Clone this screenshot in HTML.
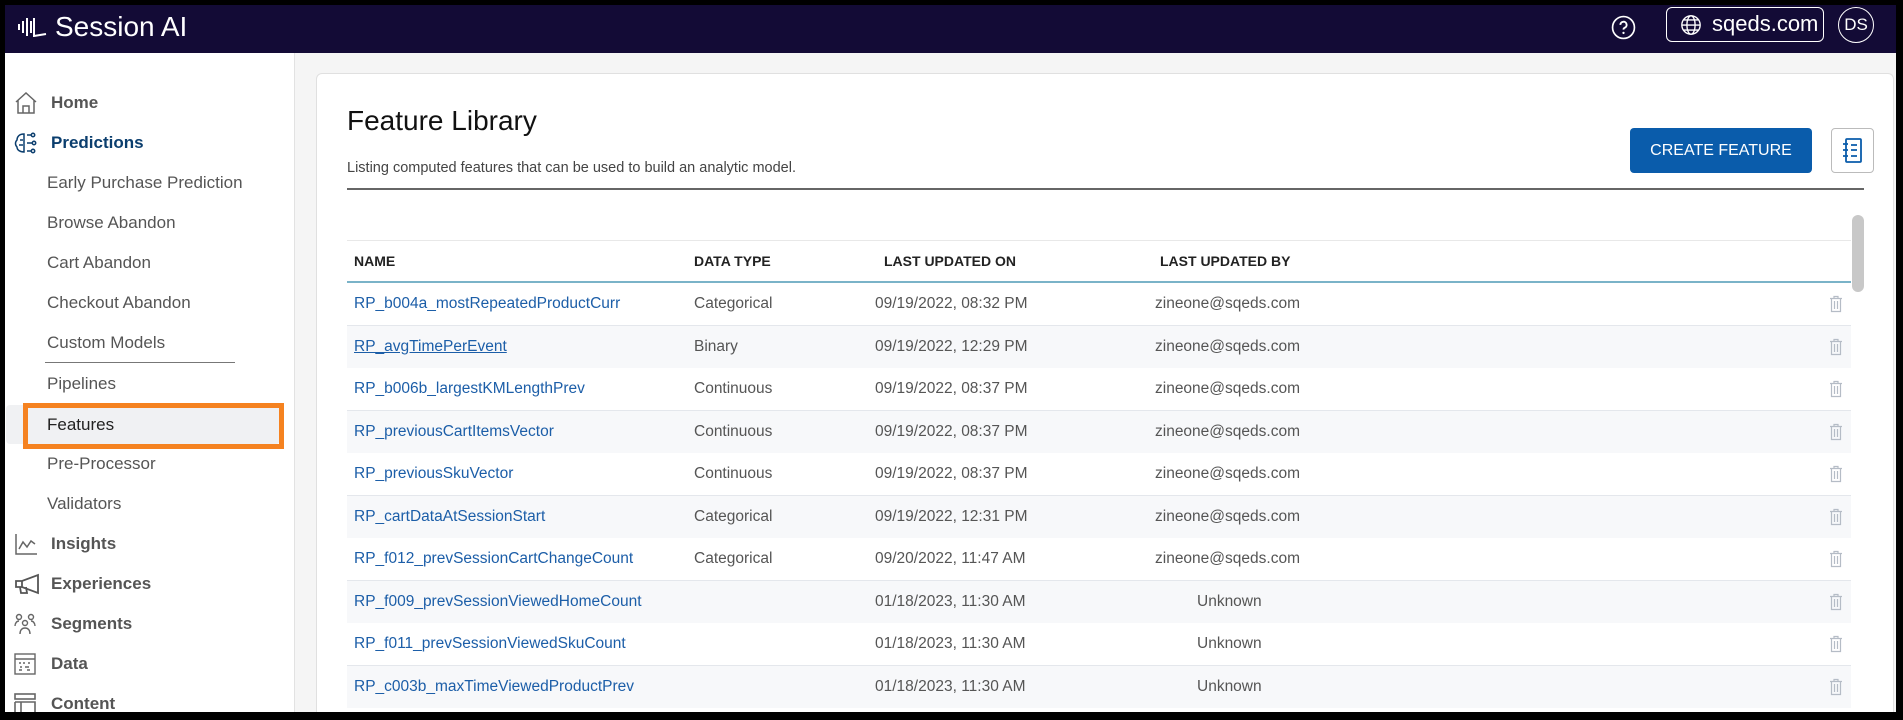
<!DOCTYPE html>
<html><head><meta charset="utf-8"><style>
*{margin:0;padding:0;box-sizing:border-box}
html,body{width:1903px;height:720px;overflow:hidden}
body{background:#000;position:relative;font-family:"Liberation Sans",Arial,sans-serif}
.a{position:absolute;white-space:nowrap}
#hdr{left:5px;top:5px;width:1891px;height:48px;background:#130b36}
#side{left:5px;top:53px;width:290px;height:659px;background:#fff;border-right:1px solid #e2e2e2}
#main{left:295px;top:53px;width:1601px;height:659px;background:#f5f5f5}
#card{left:316px;top:73px;width:1578px;height:639px;background:#fff;border:1px solid #e0e0e0;border-bottom:none;border-radius:6px 6px 0 0}
.nav{font-size:17px;font-weight:bold;color:#555;left:51px;transform:translateY(-50%)}
.sub{font-size:17px;color:#555;left:47px;transform:translateY(-50%)}
.ic{left:14px;transform:translateY(-50%)}
.row{left:347px;width:1504px;height:43px;border-bottom:1px solid #e4e7ec;font-size:15.5px;color:#555}
.row span{position:absolute;top:50%;transform:translateY(-50%)}
.th{font-size:14px;font-weight:bold;color:#222;top:261px;transform:translateY(-50%)}
#clip{position:absolute;left:0;top:0;width:1903px;height:712px;overflow:hidden}
</style></head><body>
<div id="clip">
<div class="a" id="hdr"></div>
<svg class="a" style="left:17px;top:17px" width="30" height="20" viewBox="0 0 30 20"><g stroke="#fff" stroke-width="2" fill="none"><path d="M2 7v6M6 4v12M10 1v18M14 4v12M17 1v18L29 17"/></g></svg>
<div class="a" style="left:55px;top:11px;font-size:28px;color:#fff">Session AI</div>
<svg class="a" style="left:1611px;top:15px" width="25" height="25" viewBox="0 0 24 24"><circle cx="12" cy="12" r="10.5" fill="none" stroke="#fff" stroke-width="1.6"/><path d="M9 9.5a3 3 0 1 1 4 2.8c-.8.4-1 .9-1 1.7" fill="none" stroke="#fff" stroke-width="1.8"/><circle cx="12" cy="17.2" r="1.1" fill="#fff"/></svg>
<div class="a" style="left:1666px;top:7px;width:158px;height:35px;border:1px solid #fff;border-radius:6px"></div>
<svg class="a" style="left:1680px;top:14px" width="22" height="22" viewBox="0 0 24 24"><g fill="none" stroke="#fff" stroke-width="1.5"><circle cx="12" cy="12" r="10"/><ellipse cx="12" cy="12" rx="4.5" ry="10"/><path d="M2 12h20M4 6.5h16M4 17.5h16"/></g></svg>
<div class="a" style="left:1712px;top:11px;font-size:22px;color:#fff">sqeds.com</div>
<div class="a" style="left:1838px;top:7px;width:36px;height:36px;border:1px solid #fff;border-radius:50%;color:#fff;font-size:17px;line-height:34px;text-align:center">DS</div>

<div class="a" id="main"></div>
<div class="a" id="side"></div>

<svg class="a ic" style="top:103px" width="24" height="22" viewBox="0 0 24 22"><path d="M2 10 12 1l10 9M4 8v13h16V8M9 21v-7h6v7" fill="none" stroke="#666" stroke-width="1.5"/></svg>
<div class="a nav" style="top:103px">Home</div>
<svg class="a ic" style="top:143px" width="24" height="22" viewBox="0 0 24 22"><g fill="none" stroke="#0b3e6e" stroke-width="1.5"><path d="M10 2C5 2 3 5 3 8c-2 2-2 5 0 7 0 3 3 5 7 5V2zM6 8h3M5 13h4M17 3h-4M18 11h-5M17 19h-4"/><circle cx="19" cy="3" r="1.7"/><circle cx="20" cy="11" r="1.7"/><circle cx="19" cy="19" r="1.7"/></g></svg>
<div class="a nav" style="top:143px;color:#0b3e6e">Predictions</div>
<div class="a sub" style="top:183px">Early Purchase Prediction</div>
<div class="a sub" style="top:223px">Browse Abandon</div>
<div class="a sub" style="top:263px">Cart Abandon</div>
<div class="a sub" style="top:303px">Checkout Abandon</div>
<div class="a sub" style="top:343px">Custom Models</div>
<div class="a" style="left:45px;top:362px;width:190px;height:1px;background:#777"></div>
<div class="a sub" style="top:384px">Pipelines</div>
<div class="a" style="left:6px;top:405px;width:274px;height:39px;background:#f0f1f3;border-radius:4px"></div>
<div class="a" style="left:23px;top:403px;width:261px;height:46px;border:5px solid #f58220"></div>
<div class="a sub" style="top:425px;color:#222">Features</div>
<div class="a sub" style="top:464px">Pre-Processor</div>
<div class="a sub" style="top:504px">Validators</div>
<svg class="a ic" style="top:544px" width="24" height="22" viewBox="0 0 24 22"><path d="M2 1v20h21M5 16l4-7 4 5 4-6 4 3" fill="none" stroke="#666" stroke-width="1.5"/></svg>
<div class="a nav" style="top:544px">Insights</div>
<svg class="a ic" style="top:584px" width="26" height="22" viewBox="0 0 26 22"><path d="M2 8h6L24 2v18L8 14H2zM8 8v6M6 14l1 6h6l-1-6" fill="none" stroke="#555" stroke-width="1.8"/></svg>
<div class="a nav" style="top:584px">Experiences</div>
<svg class="a ic" style="top:624px" width="24" height="22" viewBox="0 0 24 22"><g fill="none" stroke="#666" stroke-width="1.4"><circle cx="5" cy="4" r="2.5"/><circle cx="17" cy="4" r="2.5"/><circle cx="11" cy="10" r="2.5"/><path d="M1 13c0-3 2-5 4-5M21 13c0-3-2-5-4-5M6 21c0-4 2-6 5-6s5 2 5 6"/></g></svg>
<div class="a nav" style="top:624px">Segments</div>
<svg class="a ic" style="top:664px" width="22" height="22" viewBox="0 0 22 22"><g fill="none" stroke="#666" stroke-width="1.4"><rect x="1" y="1" width="20" height="20"/><path d="M1 6h20M5 10h2M9 10h2M14 10h2M6 14h2M11 14h4M5 17h3M13 17h3"/></g></svg>
<div class="a nav" style="top:664px">Data</div>
<svg class="a ic" style="top:704px" width="22" height="22" viewBox="0 0 22 22"><g fill="none" stroke="#666" stroke-width="1.6"><rect x="1" y="1" width="20" height="5"/><path d="M1 9h20v12M1 9v12M7 9v12"/></g></svg>
<div class="a nav" style="top:704px">Content</div>

<div class="a" id="card"></div>
<div class="a" style="left:347px;top:105px;font-size:28px;color:#111">Feature Library</div>
<div class="a" style="left:347px;top:160px;font-size:14.5px;color:#444">Listing computed features that can be used to build an analytic model.</div>
<div class="a" style="left:347px;top:188px;width:1517px;height:2px;background:#666"></div>
<div class="a" style="left:1630px;top:128px;width:182px;height:45px;background:#0a5cab;border-radius:4px;color:#fff;font-size:16px;line-height:45px;text-align:center">CREATE FEATURE</div>
<div class="a" style="left:1831px;top:128px;width:43px;height:45px;border:1px solid #bbb;border-radius:4px"></div>
<svg class="a" style="left:1841px;top:138px" width="22" height="26" viewBox="0 0 22 26"><g fill="none" stroke="#0a5cab" stroke-width="1.8"><rect x="5" y="1" width="15" height="23" rx="1"/><path d="M2 6h5M2 12h5M2 18h5M10 7h6M10 12h6M10 18h6"/></g></svg>

<div class="a" style="left:347px;top:240px;width:1504px;height:43px;border-top:1px solid #e8e8e8;border-bottom:2px solid #7ab3c8"></div>
<div class="a th" style="left:354px">NAME</div>
<div class="a th" style="left:694px">DATA TYPE</div>
<div class="a th" style="left:884px">LAST UPDATED ON</div>
<div class="a th" style="left:1160px">LAST UPDATED BY</div>
<div class="a" style="left:1852px;top:215px;width:12px;height:77px;background:#c8c8c8;border-radius:6px"></div>

<div id="rows"></div>
</div>
<script>
var d=[["RP_b004a_mostRepeatedProductCurr","Categorical","09/19/2022, 08:32 PM","zineone@sqeds.com"],
["RP_avgTimePerEvent","Binary","09/19/2022, 12:29 PM","zineone@sqeds.com"],
["RP_b006b_largestKMLengthPrev","Continuous","09/19/2022, 08:37 PM","zineone@sqeds.com"],
["RP_previousCartItemsVector","Continuous","09/19/2022, 08:37 PM","zineone@sqeds.com"],
["RP_previousSkuVector","Continuous","09/19/2022, 08:37 PM","zineone@sqeds.com"],
["RP_cartDataAtSessionStart","Categorical","09/19/2022, 12:31 PM","zineone@sqeds.com"],
["RP_f012_prevSessionCartChangeCount","Categorical","09/20/2022, 11:47 AM","zineone@sqeds.com"],
["RP_f009_prevSessionViewedHomeCount","","01/18/2023, 11:30 AM","Unknown"],
["RP_f011_prevSessionViewedSkuCount","","01/18/2023, 11:30 AM","Unknown"],
["RP_c003b_maxTimeViewedProductPrev","","01/18/2023, 11:30 AM","Unknown"],["","","",""]];
var h="",tr='<svg style="position:absolute;left:1482px;top:50%;transform:translateY(-50%)" width="14" height="18" viewBox="0 0 14 18"><g fill="none" stroke="#b5bcc6" stroke-width="1.2"><path d="M1 3.5h12M5 3.5V1.5h4v2M2.5 3.5v13h9v-13M5.5 6v8M8.5 6v8"/></g></svg>';
for(var i=0;i<d.length;i++){var r=d[i],y=283+i*42.5;
h+='<div class="a row" style="top:'+y+'px;background:'+(i%2?'#f7f8fa':'#fff')+'">'+
'<span style="left:7px;color:#1c5ea8;'+(i==1?'text-decoration:underline':'')+'">'+r[0]+'</span>'+
'<span style="left:347px">'+r[1]+'</span><span style="left:528px">'+r[2]+'</span>'+
'<span style="left:'+(r[3]=="Unknown"?850:808)+'px">'+r[3]+'</span>'+(r[0]?tr:'')+'</div>';}
document.getElementById('rows').innerHTML=h;
</script>
<div class="a" style="left:1896px;top:0;width:7px;height:720px;background:#000"></div>
</body></html>
